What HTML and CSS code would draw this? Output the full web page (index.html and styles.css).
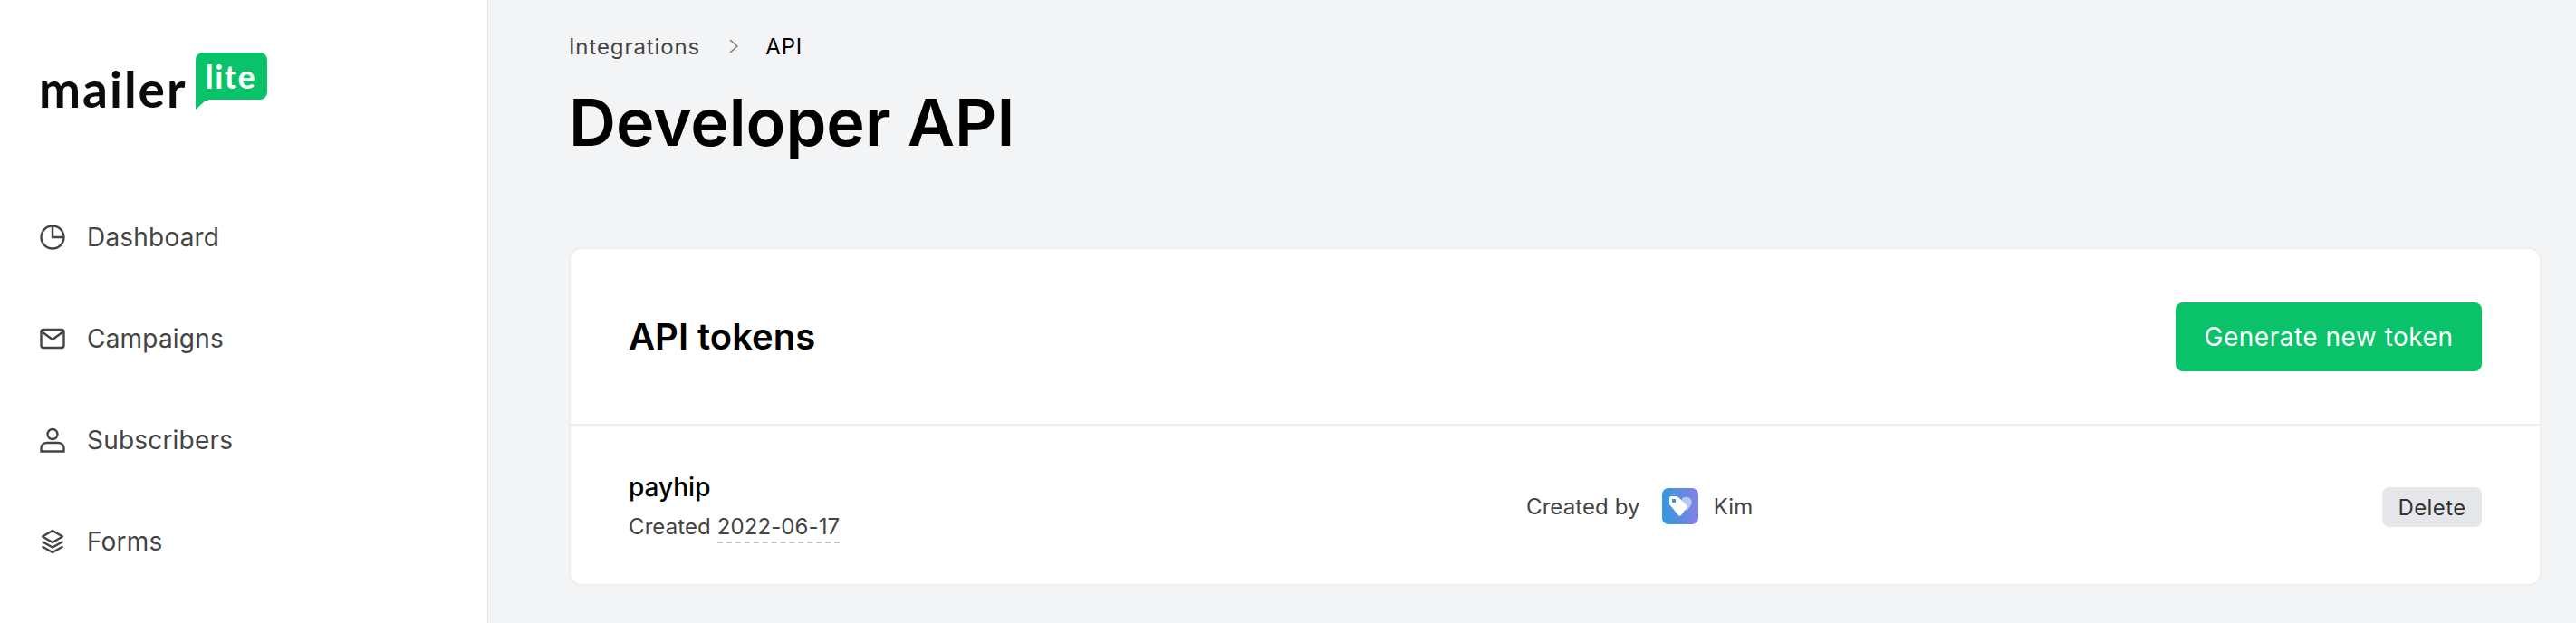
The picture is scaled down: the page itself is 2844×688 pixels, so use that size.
FILE: index.html
```html
<!DOCTYPE html>
<html lang="en">
<head>
    <meta charset="UTF-8">
    <title>Developer API</title>
    <link rel="stylesheet" href="styles.css">
</head>
<body>
    <div class="layout">
        <aside class="sidebar">
            <div class="logo">
                <span class="logo-word">mailer</span>
                <span class="logo-badge">
                    <svg class="logo-tail" width="14" height="23" viewBox="0 0 14 23"><path d="M0 0H14V13H11L0 23Z" fill="#09c269"/></svg>
                    <span class="logo-lite">lite</span>
                </span>
            </div>
            <nav class="nav">
                <a class="nav-item">
                    <svg class="nav-icon" viewBox="0 0 28 28" fill="none" stroke="#444" stroke-width="2.4"><circle cx="14" cy="14" r="12.5"/><path d="M14 1.5V14H26.5"/></svg>
                    Dashboard
                </a>
                <a class="nav-item">
                    <svg class="nav-icon" viewBox="0 0 28 28" fill="none" stroke="#444" stroke-width="2.4"><rect x="1.5" y="4" width="25" height="20" rx="2.5"/><path d="M2.5 6.5L14 15L25.500 6.500" stroke-linejoin="round"/></svg>
                    Campaigns
                </a>
                <a class="nav-item">
                    <svg class="nav-icon" viewBox="0 0 28 28" fill="none" stroke="#444" stroke-width="2.400"><circle cx="14" cy="7.500" r="5.500"/><path d="M1.500 26.500V23C1.500 19 4.500 17 8 17H20C23.500 17 26.500 19 26.500 23V26.500Z"/></svg>
                    Subscribers
                </a>
                <a class="nav-item">
                    <svg class="nav-icon" viewBox="0 0 28 28" fill="none" stroke="#444" stroke-width="2.400" stroke-linejoin="round"><path d="M14 2L25 8.500L14 15L3 8.500Z"/><path d="M2.500 14L14 20.500L25.500 14"/><path d="M2.500 19.500L14 26L25.500 19.500"/></svg>
                    Forms
                </a>
            </nav>
        </aside>
        <main class="content">
            <div class="breadcrumb">
                <span>Integrations</span>
                <svg class="crumb-sep" width="10" height="16" viewBox="0 0 10 16" fill="none" stroke="#777" stroke-width="1.500"><path d="M1 1L9 8L1 15"/></svg>
                <span class="crumb-current">API</span>
            </div>
            <h1>Developer API</h1>
            <section class="card">
                <div class="card-head">
                    <h2>API tokens</h2>
                    <button class="btn-primary">Generate new token</button>
                </div>
                <div class="token-row">
                    <div class="token-info">
                        <div class="token-name">payhip</div>
                        <div class="token-date">Created <span class="date-value">2022-06-17</span></div>
                    </div>
                    <div class="token-author">
                        <span>Created by</span>
                        <svg class="avatar" viewBox="0 0 40 40">
                            <defs><linearGradient id="avatarGrad" x1="0" y1="0" x2="1" y2="0"><stop offset="0" stop-color="#3498dc"/><stop offset="1" stop-color="#8481e6"/></linearGradient></defs>
                            <rect width="40" height="40" rx="7" fill="url(#avatarGrad)"/>
                            <path d="M22 12C24 9 30 9 32 13C34 17 31 21 27 25L20 20Z" fill="#b9c9f2"/>
                            <path d="M8 18V11C8 10 9 9 10 9H15C17 9 19 11 20.500 12.500L27 19C28 20 28 21 27 22L21 30C20 31 19 31 18 30Z" fill="#fff"/>
                            <rect x="11" y="12" width="4" height="4" fill="#3f93dc"/>
                        </svg>
                        <span>Kim</span>
                    </div>
                    <button class="btn-delete">Delete</button>
                </div>
            </section>
        </main>
    </div>
</body>
</html>
```

FILE: styles.css
```css
html, body { height: 100%; }
body { margin: 0; background: #f3f4f6; font-family: Inter, "Liberation Sans", sans-serif; color: #000; overflow: hidden; }
.layout { display: flex; height: 100%; }
.sidebar { width: 538px; flex: none; background: #fff; border-right: 1px solid #e5e7eb; }
.logo { display: flex; align-items: flex-start; padding: 58px 0 0 43px; height: 206px; box-sizing: border-box; }
.logo-word { font-family: Lato, sans-serif; font-weight: 700; font-size: 55px; line-height: 1; letter-spacing: 2px; color: #0b0b0b; margin-top: 13px; }
.logo-badge { position: relative; width: 79px; height: 52px; background: #09c269; border-radius: 8px; margin-left: 9px; display: flex; justify-content: center; }
.logo-tail { position: absolute; left: 0; top: 40px; }
.logo-lite { position: relative; font-family: Lato, sans-serif; font-weight: 700; font-size: 36px; line-height: 52px; color: #fff; letter-spacing: 1.5px; }
.nav { display: flex; flex-direction: column; }
.nav-item { display: flex; align-items: center; gap: 24px; height: 112px; padding-left: 44px; font-size: 28px; color: #444; letter-spacing: 0.2px; }
.nav-icon { width: 28px; height: 28px; flex: none; }
.content { flex: 1; padding: 0 38px 0 89px; }
.breadcrumb { display: flex; align-items: center; height: 50px; margin-top: 26px; font-size: 24px; letter-spacing: 0.9px; color: #444; }
.crumb-sep { margin: 0 30px 0 32px; }
.crumb-current { color: #000; }
h1 { margin: 17px 0 0; font-size: 72px; line-height: 84px; font-weight: 600; }
.card { margin-top: 96px; background: #fff; border: 2px solid #eceef1; border-radius: 14px; }
.card-head { display: flex; justify-content: space-between; align-items: center; height: 193px; padding: 0 64px 0 64px; border-bottom: 2px solid #eceef1; }
h2 { margin: 0; font-size: 40px; font-weight: 600; }
.btn-primary { height: 76px; width: 338px; border: none; border-radius: 8px; background: #09c269; color: #fff; font: 400 28px Inter, sans-serif; letter-spacing: 0.5px; }
.token-row { display: grid; grid-template-columns: 991px 1fr auto; align-items: center; box-sizing: border-box; height: 175px; padding: 3px 64px 0; }
.token-name { font-size: 28px; font-weight: 500; line-height: 40px; }
.token-date { font-size: 24px; line-height: 36px; margin-top: 6px; color: #444; letter-spacing: 0.1px; }
.date-value { border-bottom: 2px dashed #c4c4c4; padding-bottom: 2px; }
.token-author { display: flex; align-items: center; font-size: 24px; color: #444; letter-spacing: 0.1px; }
.avatar { width: 40px; height: 40px; margin: 0 17px 0 24px; }
.btn-delete { justify-self: end; height: 44px; width: 110px; margin-top: 2px; border: none; border-radius: 8px; background: #e6e7eb; color: #333; font: 400 24px Inter, sans-serif; letter-spacing: 0.4px; }
```
